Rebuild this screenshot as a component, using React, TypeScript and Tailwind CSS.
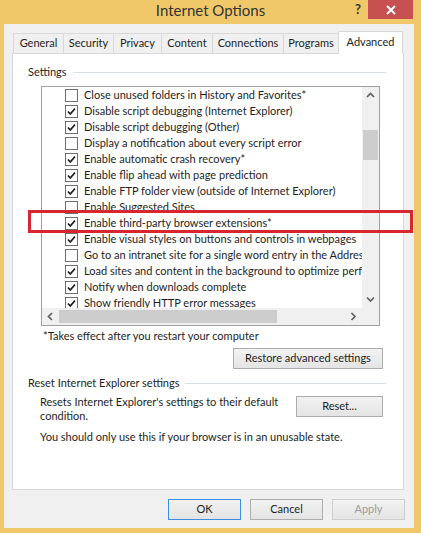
import React from "react";

const FONT = { fontFamily: 'Lato, "Noto Sans", sans-serif' };

const tabs = [
  { label: "General", w: 50 },
  { label: "Security", w: 50 },
  { label: "Privacy", w: 48 },
  { label: "Content", w: 51 },
  { label: "Connections", w: 71 },
  { label: "Programs", w: 55 },
];

const items: { text: string; checked: boolean }[] = [
  { text: "Close unused folders in History and Favorites*", checked: false },
  { text: "Disable script debugging (Internet Explorer)", checked: true },
  { text: "Disable script debugging (Other)", checked: true },
  { text: "Display a notification about every script error", checked: false },
  { text: "Enable automatic crash recovery*", checked: true },
  { text: "Enable flip ahead with page prediction", checked: true },
  { text: "Enable FTP folder view (outside of Internet Explorer)", checked: true },
  { text: "Enable Suggested Sites", checked: false },
  { text: "Enable third-party browser extensions*", checked: true },
  { text: "Enable visual styles on buttons and controls in webpages", checked: true },
  { text: "Go to an intranet site for a single word entry in the Address bar", checked: false },
  { text: "Load sites and content in the background to optimize performance", checked: true },
  { text: "Notify when downloads complete", checked: true },
  { text: "Show friendly HTTP error messages", checked: true },
];

function Check({ checked }: { checked: boolean }) {
  return (
    <div className="w-[13px] h-[13px] shrink-0 border border-[#707070] bg-white flex items-center justify-center">
      {checked && (
        <svg width="11" height="11" viewBox="0 0 11 11">
          <path d="M2 5.5 L4.3 8 L9 2.5" fill="none" stroke="#1e1e1e" strokeWidth="1.8" />
        </svg>
      )}
    </div>
  );
}

function Chevron({ dir }: { dir: "up" | "down" | "left" | "right" }) {
  const d = {
    up: "M1 6 L4.5 2.5 L8 6",
    down: "M1 2.5 L4.5 6 L8 2.5",
    left: "M6 1 L2.5 4.5 L6 8",
    right: "M2.5 1 L6 4.5 L2.5 8",
  }[dir];
  return (
    <svg width="9" height="9" viewBox="0 0 9 9">
      <path d={d} fill="none" stroke="#606060" strokeWidth="1.7" />
    </svg>
  );
}

function Btn({ children, w, variant }: { children: React.ReactNode; w: number; variant?: "default" | "disabled" }) {
  const border =
    variant === "default" ? "border-[#3c8fe0]" : variant === "disabled" ? "border-[#cfcfcf]" : "border-[#adadad]";
  const color = variant === "disabled" ? "text-[#9e9e9e]" : "text-[#1e1e1e]";
  return (
    <div
      className={`h-[21px] border ${border} ${color} bg-linear-to-b from-[#f2f2f2] to-[#e4e4e4] flex items-center justify-center text-[11px] whitespace-nowrap`}
      style={{ width: w }}
    >
      {children}
    </div>
  );
}

function GroupHeader({ label }: { label: string }) {
  return (
    <div className="flex items-center h-[16px] ml-[15px] mr-[17px]">
      <span className="text-[11px] leading-[16px] text-[#1e1e1e] pr-[6px]">{label}</span>
      <div className="flex-1 h-px bg-[#d5dfe5]" />
    </div>
  );
}

export default function App() {
  return (
    <div className="relative w-[421px] h-[533px] bg-[#f0c869] flex flex-col overflow-hidden" style={FONT}>
      {/* title bar */}
      <div className="h-[24px] flex items-start">
        <div className="w-[76px]" />
        <div className="flex-1 text-center text-[15px] leading-[20px] text-[#333333]">Internet Options</div>
        <div className="w-[76px] flex items-start">
          <span className="w-[23px] text-[13px] leading-[18px] font-bold text-[#333333] text-right pr-[7px]">?</span>
          <div className="w-[45px] h-[19px] bg-[#c75050] flex items-center justify-center">
            <svg width="10" height="10" viewBox="0 0 10 10">
              <path d="M1 1 L9 9 M9 1 L1 9" stroke="#ffffff" strokeWidth="2" />
            </svg>
          </div>
        </div>
      </div>

      {/* dialog body */}
      <div className="flex-1 ml-[4px] mr-[7px] mb-[5px] bg-[#f0f0f0] flex flex-col text-[#1e1e1e]">
        {/* tabs */}
        <div className="flex items-end ml-[9px] mt-[7px] h-[22px] relative z-10">
          {tabs.map((t, i) => (
            <div
              key={t.label}
              className={`h-[20px] border border-b-0 border-[#d9d9d9] bg-[#f0f0f0] flex items-center justify-center text-[11px] ${i > 0 ? "-ml-px" : ""}`}
              style={{ width: t.w + 1 }}
            >
              {t.label}
            </div>
          ))}
          <div className="-ml-px w-[65px] h-[23px] -mb-px border border-b-0 border-[#d9d9d9] bg-white flex items-start justify-center pt-[2px] text-[11px]">
            Advanced
          </div>
        </div>

        {/* tab page */}
        <div className="ml-[8px] w-[392px] h-[437px] border border-[#d9d9d9] bg-white flex flex-col">
          <div className="mt-[10px]">
            <GroupHeader label="Settings" />
          </div>

          {/* list box */}
          <div className="mt-[6px] ml-[28px] w-[339px] h-[240px] border border-[#a0a0a0] flex flex-col">
            <div className="flex flex-1 min-h-0">
              <div className="flex-1 overflow-hidden">
                {items.map((it) => (
                  <div key={it.text} className="h-[16px] flex items-center pl-[23px] whitespace-nowrap">
                    <Check checked={it.checked} />
                    <span className="ml-[6px] text-[11px] leading-[16px]">{it.text}</span>
                  </div>
                ))}
              </div>
              <div className="w-[17px] bg-[#f0f0f0] flex flex-col items-center">
                <div className="h-[17px] flex items-center justify-center">
                  <Chevron dir="up" />
                </div>
                <div className="h-[26px]" />
                <div className="w-[15px] h-[30px] bg-[#cdcdcd]" />
                <div className="flex-1" />
                <div className="h-[17px] flex items-center justify-center">
                  <Chevron dir="down" />
                </div>
              </div>
            </div>
            <div className="h-[17px] flex">
              <div className="flex-1 bg-[#f0f0f0] flex items-center">
                <div className="w-[17px] flex justify-center">
                  <Chevron dir="left" />
                </div>
                <div className="w-[218px] h-[13px] bg-[#cdcdcd]" />
                <div className="flex-1" />
                <div className="w-[17px] flex justify-center">
                  <Chevron dir="right" />
                </div>
              </div>
              <div className="w-[17px] bg-[#f0f0f0]" />
            </div>
          </div>

          <div className="mt-[2px] ml-[30px] text-[11px] leading-[16px]">*Takes effect after you restart your computer</div>

          <div className="mt-[4px] flex justify-end mr-[20px]">
            <Btn w={150}>Restore advanced settings</Btn>
          </div>

          <div className="mt-[6px]">
            <GroupHeader label="Reset Internet Explorer settings" />
          </div>

          <div className="mt-[4px] flex items-start ml-[27px] mr-[20px]">
            <div className="flex-1 text-[11px] leading-[14px] whitespace-nowrap">
              Resets Internet Explorer's settings to their default
              <br />
              condition.
            </div>
            <div className="mt-[1px]">
              <Btn w={87}>Reset...</Btn>
            </div>
          </div>

          <div className="mt-[7px] ml-[27px] text-[11px] leading-[14px]">
            You should only use this if your browser is in an unusable state.
          </div>
        </div>

        {/* dialog buttons */}
        <div className="mt-[9px] flex justify-end gap-[9px] mr-[9px]">
          <Btn w={73} variant="default">OK</Btn>
          <Btn w={73}>Cancel</Btn>
          <Btn w={73} variant="disabled">Apply</Btn>
        </div>
      </div>

      {/* red highlight annotation */}
      <div className="absolute left-[28px] top-[210px] w-[385px] h-[23px] border-[3px] border-[#d7262d]" />
    </div>
  );
}
